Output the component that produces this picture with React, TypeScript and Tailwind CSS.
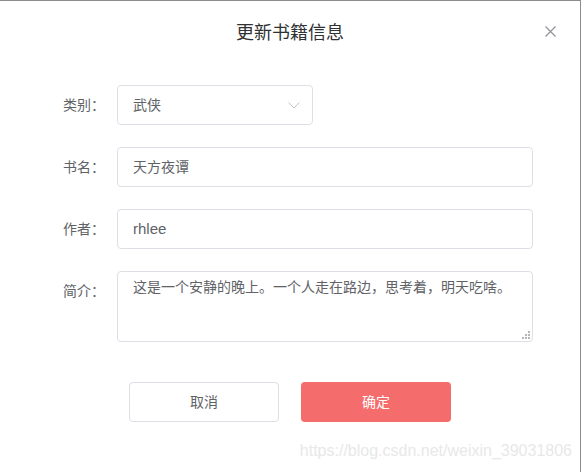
const font = "font-['Liberation_Sans','Noto_Sans_CJK_SC',sans-serif]";

function FormRow({ label, children }: { label: string; children: React.ReactNode }) {
  return (
    <div className="flex items-start mb-[22px]">
      <label className="w-[80px] shrink-0 pr-[12px] text-right text-[14px] leading-[40px] text-[#606266]">
        {label}
      </label>
      {children}
    </div>
  );
}

export default function App() {
  return (
    <div
      className={`relative w-[581px] h-[472px] bg-white border-t border-r border-[#8c8c8c] overflow-hidden ${font}`}
    >
      <div className="pt-[20px] text-center">
        <h2 className="text-[18px] leading-[24px] text-[#303133]">更新书籍信息</h2>
      </div>
      <button className="absolute top-[25px] right-[24px]">
        <svg width="11" height="11" viewBox="0 0 11 11" fill="none">
          <path d="M0.5 0.5 L10.5 10.5 M10.5 0.5 L0.5 10.5" stroke="#909399" strokeWidth="1.2" />
        </svg>
      </button>

      <form className="pl-[37px] pt-[40px]">
        <FormRow label="类别：">
          <div className="flex h-[40px] w-[196px] items-center justify-between rounded-[4px] border border-[#dcdfe6] pl-[15px] pr-[12px] text-[14px] text-[#606266]">
            <span>武侠</span>
            <svg width="12" height="7" viewBox="0 0 12 7" fill="none">
              <path d="M0.5 0.5 L6 6 L11.5 0.5" stroke="#c0c4cc" strokeWidth="1" />
            </svg>
          </div>
        </FormRow>
        <FormRow label="书名：">
          <div className="flex h-[40px] w-[416px] items-center rounded-[4px] border border-[#dcdfe6] px-[15px] text-[14px] text-[#606266]">
            天方夜谭
          </div>
        </FormRow>
        <FormRow label="作者：">
          <div className="flex h-[40px] w-[416px] items-center rounded-[4px] border border-[#dcdfe6] px-[15px] text-[15px] text-[#606266]">
            rhlee
          </div>
        </FormRow>
        <FormRow label="简介：">
          <div className="relative h-[71px] w-[416px] rounded-[4px] border border-[#dcdfe6] px-[15px] py-[5px] text-[14px] leading-[21px] text-[#606266]">
            这是一个安静的晚上。一个人走在路边，思考着，明天吃啥。
            <svg className="absolute right-[2px] bottom-[2px]" width="8" height="8" viewBox="0 0 8 8">
              <rect x="6" y="0" width="2" height="2" fill="#b5b5b5" />
              <rect x="3" y="3" width="2" height="2" fill="#b5b5b5" />
              <rect x="6" y="3" width="2" height="2" fill="#b5b5b5" />
              <rect x="0" y="6" width="2" height="2" fill="#b5b5b5" />
              <rect x="3" y="6" width="2" height="2" fill="#b5b5b5" />
              <rect x="6" y="6" width="2" height="2" fill="#b5b5b5" />
            </svg>
          </div>
        </FormRow>
      </form>

      <div className="mt-[40px] flex justify-center gap-[22px]">
        <button className="h-[40px] w-[150px] rounded-[4px] border border-[#dcdfe6] bg-white text-[14px] text-[#606266]">
          取消
        </button>
        <button className="h-[40px] w-[150px] rounded-[4px] bg-[#f56c6c] text-[14px] text-white">
          确定
        </button>
      </div>

      <div className="absolute right-[8px] bottom-[9px] text-[16px] text-[#e8e8e8] font-['Liberation_Sans',sans-serif]">
        https://blog.csdn.net/weixin_39031806
      </div>
    </div>
  );
}
